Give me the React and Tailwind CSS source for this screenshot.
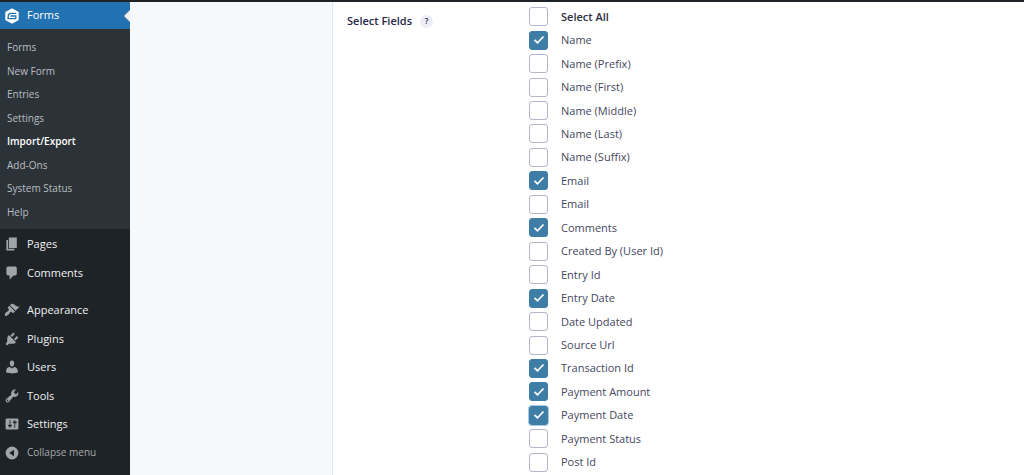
import React from "react";

const ICONS = {
  pages: "M6 15V2h10v13H6zm-1 1h8v2H3V5h2v11z",
  comments:
    "M5 2h9c1.1 0 2 .9 2 2v7c0 1.1-.9 2-2 2h-2l-5 5v-5H5c-1.1 0-2-.9-2-2V4c0-1.1.9-2 2-2z",
  appearance:
    "M14.48 11.06L7.41 3.99l1.5-1.5c.5-.56 2.3-.47 3.51.32 1.21.8 1.43 1.28 2.91 2.1 1.18.64 2.45 1.26 4.45.85zm-.71.71L6.7 4.7 4.93 6.47c-.39.39-.39 1.02 0 1.41l1.06 1.06c.39.39.39 1.03 0 1.42-.6.6-1.43 1.11-2.21 1.69-.35.26-.7.53-1.01.84C1.43 14.23.4 16.08 1.4 17.07c.99 1 2.84-.03 4.18-1.36.31-.31.58-.66.85-1.02.57-.78 1.08-1.61 1.69-2.21.39-.39 1.02-.39 1.41 0l1.06 1.06c.39.39 1.02.39 1.41 0z",
  plugins:
    "M13.11 4.36L9.87 7.6 8 5.73l3.24-3.24c.35-.34 1.05-.2 1.56.32.52.51.66 1.21.31 1.55zm-8 1.77l.91-1.12 9.01 9.01-1.19.84c-.71.71-2.63 1.16-3.82 1.16H6.14L4.9 17.26c-.59.59-1.54.59-2.12 0-.59-.58-.59-1.53 0-2.12l1.24-1.24v-3.88c0-1.13.4-3.19 1.09-3.89zm7.26 3.97l3.24-3.24c.34-.35 1.04-.21 1.55.31.52.51.66 1.21.31 1.55l-3.24 3.25z",
  users:
    "M10 9.25c-2.27 0-2.73-3.44-2.73-3.44C7 4.02 7.82 2 9.97 2c2.16 0 2.98 2.02 2.71 3.81 0 0-.41 3.44-2.68 3.44zm0 2.57L12.72 10c2.39 0 4.52 2.33 4.52 4.53v2.49s-3.65 1.13-7.24 1.13c-3.65 0-7.24-1.13-7.24-1.13v-2.49c0-2.25 1.94-4.48 4.47-4.48z",
  tools:
    "M16.68 9.77c-1.34 1.34-3.3 1.67-4.95.99l-5.41 6.52c-.99.99-2.59.99-3.58 0s-.99-2.59 0-3.57l6.52-5.42c-.68-1.65-.35-3.61.99-4.95 1.28-1.28 3.12-1.62 4.72-1.06l-2.89 2.89 2.82 2.82 2.86-2.87c.53 1.58.18 3.39-1.08 4.65zM3.81 16.21c.4.39 1.04.39 1.43 0 .4-.4.4-1.04 0-1.43-.39-.4-1.03-.4-1.43 0-.39.39-.39 1.03 0 1.43z",
  settings:
    "M18 16V4c0-.55-.45-1-1-1H3c-.55 0-1 .45-1 1v12c0 .55.45 1 1 1h14c.55 0 1-.45 1-1zM8 11h1c.55 0 1 .45 1 1s-.45 1-1 1H8v1.5c0 .28-.22.5-.5.5s-.5-.22-.5-.5V13H6c-.55 0-1-.45-1-1s.45-1 1-1h1V5.5c0-.28.22-.5.5-.5s.5.22.5.5V11zm5-2h-1c-.55 0-1-.45-1-1s.45-1 1-1h1V5.5c0-.28.22-.5.5-.5s.5.22.5.5V7h1c.55 0 1 .45 1 1s-.45 1-1 1h-1v5.5c0 .28-.22.5-.5.5s-.5-.22-.5-.5V9z",
  collapse: "M10 2a8 8 0 1 0 0 16 8 8 0 0 0 0-16zm2.5 12.2L6.5 10l6-4.2z",
};

const SUBMENU = ["Forms", "New Form", "Entries", "Settings", "Import/Export", "Add-Ons", "System Status", "Help"];

const CONTENT_MENU = [
  ["Pages", "pages"],
  ["Comments", "comments"],
];

const ADMIN_MENU = [
  ["Appearance", "appearance"],
  ["Plugins", "plugins"],
  ["Users", "users"],
  ["Tools", "tools"],
  ["Settings", "settings"],
];

const FIELDS = [
  ["Select All", false],
  ["Name", true],
  ["Name (Prefix)", false],
  ["Name (First)", false],
  ["Name (Middle)", false],
  ["Name (Last)", false],
  ["Name (Suffix)", false],
  ["Email", true],
  ["Email", false],
  ["Comments", true],
  ["Created By (User Id)", false],
  ["Entry Id", false],
  ["Entry Date", true],
  ["Date Updated", false],
  ["Source Url", false],
  ["Transaction Id", true],
  ["Payment Amount", true],
  ["Payment Date", true],
  ["Payment Status", false],
  ["Post Id", false],
];

function MenuIcon({ name }) {
  return (
    <svg viewBox="0 0 20 20" className="size-4 shrink-0 fill-[#a0a5aa]" fillRule="evenodd" aria-hidden="true">
      <path d={ICONS[name]} />
    </svg>
  );
}

function MenuLink({ label, icon }) {
  return (
    <a href="#" className="flex items-center gap-[7px] pl-1 text-[#f0f0f1]">
      <MenuIcon name={icon} />
      {label}
    </a>
  );
}

function Sidebar() {
  return (
    <nav className="w-[130px] shrink-0 bg-[#1d2327] text-[11px]">
      <a href="#" className="relative flex h-[27px] items-center gap-[7px] bg-[#2271b1] pl-1 text-white">
        <svg viewBox="0 0 16 16" className="size-4 shrink-0" aria-hidden="true">
          <path d="M8 1 14 4.3v7.4L8 15 2 11.7V4.3z" fill="#fff" stroke="#fff" strokeWidth="1.4" strokeLinejoin="round" />
          <path d="M12.2 5.3H6.6Q4.6 5.3 4.3 7.6L4 10.7h7.8V8H6.4" fill="none" stroke="#2271b1" strokeWidth="1.3" />
        </svg>
        Forms
        <svg viewBox="0 0 6 12" className="absolute right-0 h-3 w-1.5" aria-hidden="true">
          <path d="M6 0v12L0 6z" fill="#f0f0f1" />
        </svg>
      </a>
      <ul className="grid min-h-[200px] auto-rows-fr bg-[#2c3338] pt-[7px] pb-[5px] text-[10px]">
        {SUBMENU.map((item) => (
          <li key={item} className="flex items-center pl-[7px]">
            <a href="#" className={item === "Import/Export" ? "font-semibold text-white" : "text-[#b9bdc1]"}>
              {item}
            </a>
          </li>
        ))}
      </ul>
      <div className="grid min-h-[58px] auto-rows-fr pt-px">
        {CONTENT_MENU.map(([label, icon]) => (
          <MenuLink key={label} label={label} icon={icon} />
        ))}
      </div>
      <div className="mt-[9px] grid min-h-[171px] auto-rows-fr">
        {ADMIN_MENU.map(([label, icon]) => (
          <MenuLink key={label} label={label} icon={icon} />
        ))}
        <button type="button" className="flex items-center gap-[7px] pl-1 text-left text-[10px] text-[#a7aaad]">
          <MenuIcon name="collapse" />
          Collapse menu
        </button>
      </div>
    </nav>
  );
}

function FieldRow({ id, label, checked }) {
  const heading = label === "Select All";
  const focused = label === "Payment Date";
  return (
    <li className="flex items-center gap-[13px]">
      <span className="grid place-items-center">
        <input
          id={id}
          type="checkbox"
          defaultChecked={checked}
          className={
            "peer col-start-1 row-start-1 size-[19px] appearance-none rounded-[3px] border border-[#b5b5cb] bg-white checked:border-[#3e7da6] checked:bg-[#3e7da6]" +
            (focused ? " ring-1 ring-[#a9cbe6]" : "")
          }
        />
        <svg
          viewBox="0 0 12 10"
          className="pointer-events-none invisible col-start-1 row-start-1 h-2.5 w-3 peer-checked:visible"
          aria-hidden="true"
        >
          <path d="M1.5 4.8 4.5 7.8 10.5 1.5" fill="none" stroke="#fff" strokeWidth="1.8" />
        </svg>
      </span>
      <label htmlFor={id} className={heading ? "font-semibold text-[#2c2e44]" : "text-[#45475e]"}>
        {label}
      </label>
    </li>
  );
}

export default function App() {
  return (
    <div className="flex min-h-screen flex-col bg-white font-['Open_Sans','Noto_Sans',sans-serif]">
      <header className="h-0.5 bg-[#1d2327]" />
      <div className="flex flex-1">
        <Sidebar />
        <aside className="w-[203px] shrink-0 border-r border-[#e3e8f2] bg-[#f6f9fc]" />
        <main className="flex flex-1 items-start pl-3.5">
          <div className="flex w-[182px] shrink-0 items-center gap-2 pt-[11px] text-[11px] font-semibold text-[#242748]">
            <span id="fields-title">Select Fields</span>
            <button
              type="button"
              aria-label="Help"
              className="flex size-[13px] items-center justify-center rounded-full bg-[#ecedf8] text-[8px] font-semibold"
            >
              ?
            </button>
          </div>
          <ul aria-labelledby="fields-title" className="grid min-h-[472px] flex-1 auto-rows-fr pt-[3px] text-[11px] leading-4">
            {FIELDS.map(([label, checked], index) => (
              <FieldRow key={index} id={`field-${index}`} label={label} checked={checked} />
            ))}
          </ul>
        </main>
      </div>
    </div>
  );
}
